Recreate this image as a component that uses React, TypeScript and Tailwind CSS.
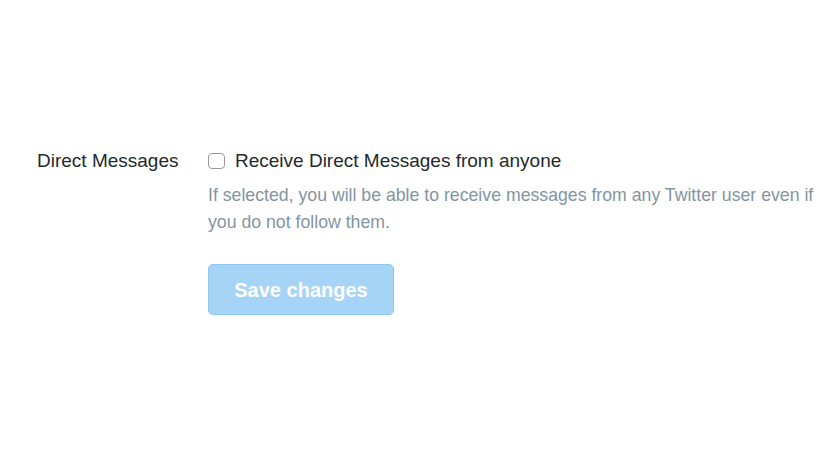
import React from "react";

export default function App() {
  return (
    <div
      className="w-[840px] h-[472px] bg-white overflow-hidden"
      style={{ fontFamily: '"Liberation Sans", Arial, sans-serif' }}
    >
      <div className="flex pt-[149px] pl-[37px] pr-[12px]">
        <div className="w-[171px] shrink-0 text-[19px] leading-[24px] text-[#24292d]">
          Direct Messages
        </div>
        <div className="flex-1 flex flex-col">
          <label className="flex items-center h-[24px] text-[19px] leading-[24px] text-[#24292d]">
            <span className="w-[17px] h-[16px] rounded-[4px] border border-[#9a9a9a] bg-white shrink-0 mr-[10px]" />
            Receive Direct Messages from anyone
          </label>
          <p className="mt-[9px] text-[17.7px] leading-[27px] text-[#8494a1]">
            If selected, you will be able to receive messages from any Twitter user even if you do not follow them.
          </p>
          <div className="mt-[28px]">
            <button className="w-[186px] h-[51px] rounded-[5px] bg-[#a6d4f7] border border-[#8fc5ee] text-white font-bold text-[20px]">
              Save changes
            </button>
          </div>
        </div>
      </div>
    </div>
  );
}
